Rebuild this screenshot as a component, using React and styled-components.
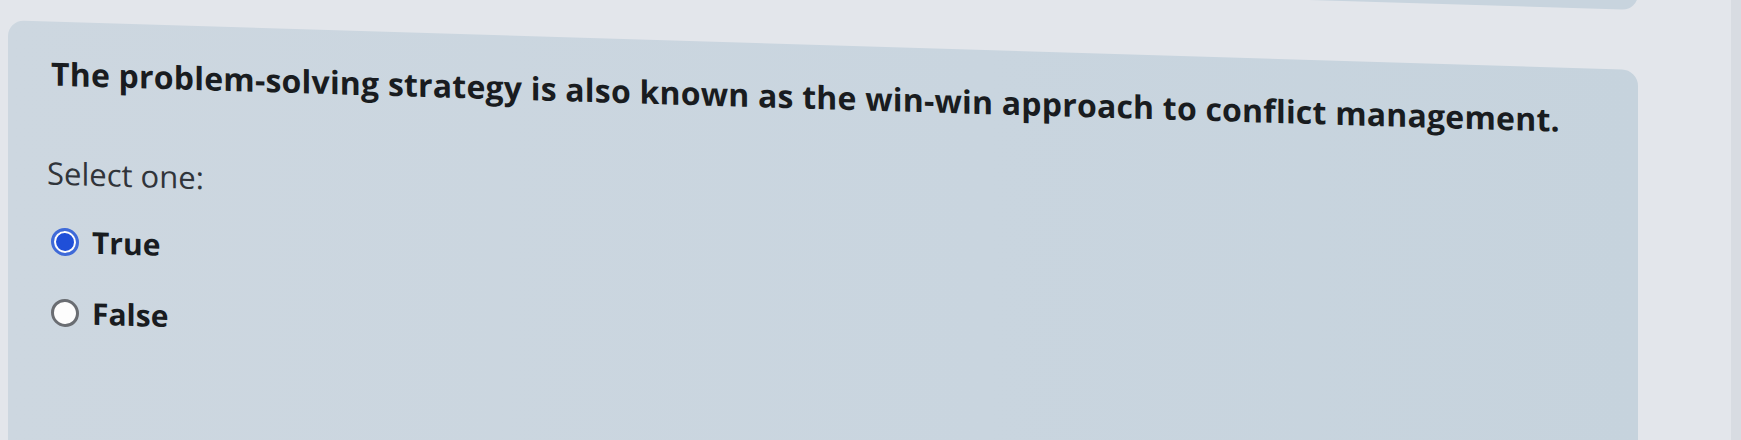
import React from 'react'
import styled, { createGlobalStyle } from 'styled-components'

const GlobalStyle = createGlobalStyle`
  html, body {
    margin: 0;
    padding: 0;
    height: 100%;
    overflow: hidden;
  }
  body {
    background: #e3e6eb;
    font-family: "Open Sans", "Noto Sans", sans-serif;
    color: #1e2226;
  }
`

function App() {
  return (
    <>
      <GlobalStyle />
      <Viewport>
        <Page>
          <PrevCard />
          <QuestionCard>
            <QuestionText>
              The problem-solving strategy is also known as the win-win approach to conflict management.
            </QuestionText>
            <Prompt>Select one:</Prompt>
            <Answers>
              <Option>
                <Radio checked />
                <OptionLabel>True</OptionLabel>
              </Option>
              <Option>
                <Radio />
                <OptionLabel>False</OptionLabel>
              </Option>
            </Answers>
          </QuestionCard>
        </Page>
        <Scrollbar />
      </Viewport>
    </>
  )
}

export default App

const Viewport = styled.div`
  display: flex;
  height: 440px;
  overflow: hidden;
`

// the page is tilted a little, as it is seen on the screen
const Page = styled.div`
  flex: 1;
  display: flex;
  flex-direction: column;
  gap: 60px;
  padding: 0 93px 0 8px;
  margin-top: -80px;
  transform: skewY(1.75deg);
  transform-origin: 0 0;
`

const PrevCard = styled.div`
  height: 40px;
  flex-shrink: 0;
  background: #c8d4de;
  border-radius: 0 0 16px 16px;
`

const QuestionCard = styled.div`
  height: 520px;
  flex-shrink: 0;
  padding: 33px 43px 0;
  background: linear-gradient(90deg, #cdd7e0 0%, #c9d5df 60%, #c6d3dd 100%);
  border-radius: 16px;
`

const QuestionText = styled.p`
  margin: 0;
  font-size: 32px;
  font-weight: 700;
  line-height: 38px;
  letter-spacing: 0.2px;
  white-space: nowrap;
  color: #191c20;
`

const Prompt = styled.p`
  margin: 61px 0 0 -4px;
  font-size: 31px;
  font-weight: 400;
  line-height: 38px;
  color: #30343a;
`

const Answers = styled.div`
  display: flex;
  flex-direction: column;
  gap: 33px;
  margin-top: 31px;
`

const Option = styled.label`
  display: flex;
  align-items: center;
  gap: 13px;
`

const Radio = styled.span`
  width: 22px;
  height: 22px;
  flex-shrink: 0;
  border-radius: 50%;
  background: #fdfdfd;
  border: 3px solid ${p => (p.checked ? '#3f6ad8' : '#6a6d72')};
  box-shadow: ${p => (p.checked ? 'inset 0 0 0 2px #fdfdfd, inset 0 0 0 12px #1f4fd8' : 'none')};
`

const OptionLabel = styled.span`
  font-size: 30px;
  font-weight: 700;
  line-height: 38px;
  color: #191c20;
`

const Scrollbar = styled.div`
  width: 10px;
  flex-shrink: 0;
  background: #d8dce2;
`
